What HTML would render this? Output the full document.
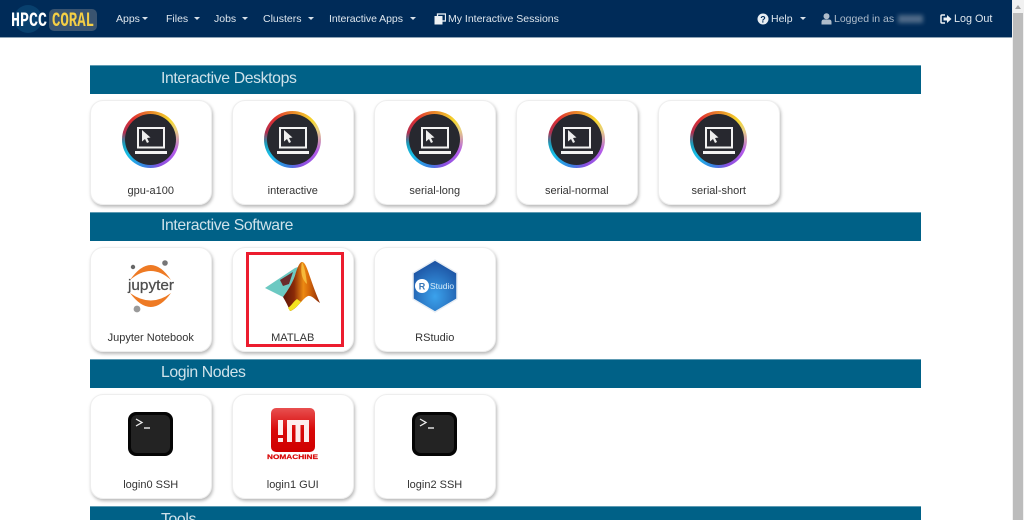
<!DOCTYPE html>
<html><head><meta charset="utf-8"><style>
html,body{margin:0;padding:0;background:#fff}
body{width:1024px;height:520px;overflow:hidden;position:relative;font-family:"Liberation Sans",sans-serif}
.nav{position:absolute;left:0;top:0;width:1012px;height:37px;background:#002b58;border-bottom:1px solid #8ea3b5}
.n{position:absolute;top:13px;font-size:10.5px;line-height:12px;color:#dfe7ee;white-space:nowrap}
.c{display:inline-block;width:0;height:0;border:3px solid transparent;border-top-color:#d9e2ea;border-bottom:0;vertical-align:2px;margin-left:4px}
.bar{position:absolute;left:90px;width:831px;height:29px;background:#006187;border-top:1px solid #5e9bb3;box-sizing:border-box;color:#cfe2ea;font-size:15.8px;line-height:25px;padding-left:71px;letter-spacing:-.38px;overflow:hidden}
.card{position:absolute;width:121.5px;height:105px;background:#fff;border-radius:13px;border:1px solid #eee;box-sizing:border-box;box-shadow:1px 2px 3px rgba(0,0,0,.28)}
.card span{position:absolute;left:0;right:0;top:84px;text-align:center;font-size:11px;line-height:12px;color:#333}
.card svg{position:absolute;left:0;top:0}
.ring{position:absolute;left:31px;top:10px;width:57px;height:57px;border-radius:50%;background:conic-gradient(from 0deg,#e8872a 0deg,#f5d52c 45deg,#e8d080 70deg,#b45ce8 115deg,#8a4fe0 160deg,#3a7fe0 190deg,#18c0e8 235deg,#1d9ab8 262deg,#b03050 285deg,#e03030 320deg,#e8872a 360deg)}
.ring i{position:absolute;left:3px;top:3px;width:51px;height:51px;border-radius:50%;background:#27282f}
.ring svg{left:0;top:0}
.sb{position:absolute;left:1012px;top:0;width:12px;height:520px;background:#f1f1f1}
.sb b{position:absolute;left:1px;top:13px;width:10px;height:507px;background:#bcbcbc}
.sb u{position:absolute;left:3px;top:5px;border:3px solid transparent;border-bottom:4px solid #a3a3a3;border-top:0}
</style></head><body>
<div class="nav">
<svg width="100" height="37" style="position:absolute;left:0;top:0"><circle cx="28" cy="19" r="14" fill="#0b4a78" opacity=".7"/><rect x="49" y="9" width="48" height="22" rx="5" fill="#3a5470"/><text x="11" y="26" font-family="Liberation Mono" font-weight="700" font-size="20" fill="#fff" textLength="36" lengthAdjust="spacingAndGlyphs">HPCC</text><text x="52" y="26" font-family="Liberation Mono" font-weight="700" font-size="20" fill="#f5cf45" textLength="42" lengthAdjust="spacingAndGlyphs">CORAL</text></svg>
<div class="n" style="left:116px">Apps<i class="c" style="margin-left:2px"></i></div>
<div class="n" style="left:166px">Files<i class="c" style="margin-left:6px"></i></div>
<div class="n" style="left:214px">Jobs<i class="c" style="margin-left:6px"></i></div>
<div class="n" style="left:263px">Clusters<i class="c" style="margin-left:6px"></i></div>
<div class="n" style="left:329px;letter-spacing:-.05px">Interactive Apps<i class="c" style="margin-left:7px"></i></div>
<svg width="12" height="12" style="position:absolute;left:434px;top:13px"><rect x="3.5" y="1" width="8" height="7" fill="none" stroke="#e8eef3" stroke-width="1.3"/><rect x="0.5" y="3" width="8" height="8.5" fill="#eef2f5"/></svg>
<div class="n" style="left:448px">My Interactive Sessions</div>
<svg width="12" height="12" style="position:absolute;left:757px;top:13px"><circle cx="6" cy="6" r="5.5" fill="#e8eef3"/><text x="6" y="9.5" text-anchor="middle" font-size="9" font-weight="700" fill="#002b58" font-family="Liberation Sans">?</text></svg>
<div class="n" style="left:771px">Help<i class="c" style="margin-left:7px"></i></div>
<svg width="11" height="12" style="position:absolute;left:821px;top:13px"><circle cx="5.5" cy="3.3" r="3" fill="#aebccb"/><path d="M.5 11.500V9Q.5 6.500 3 6.500H8Q10.500 6.500 10.500 9V11.500Z" fill="#aebccb"/></svg>
<div class="n" style="left:834px;color:#aebccb">Logged in as</div>
<div style="position:absolute;left:898px;top:15px;width:25px;height:8px;background:#6a8199;filter:blur(2px);opacity:.75"></div>
<svg width="12" height="12" style="position:absolute;left:940px;top:13px"><path d="M5 2H2Q1 2 1 3V9Q1 10 2 10H5" fill="none" stroke="#eef2f5" stroke-width="1.500"/><path d="M3.500 4.500H7V2L11.500 6 7 10V7.500H3.500Z" fill="#eef2f5"/></svg>
<div class="n" style="left:954px;font-size:10.8px">Log Out</div>
</div>
<div class="sb"><u></u><b></b></div>

<svg width="0" height="0" style="position:absolute"><defs>
<g id="d"><path d="M16 17H42V36.500H16Z" fill="none" stroke="#f2f2f2" stroke-width="2"/><path d="M13 40H45V43H13Z" fill="#f2f2f2"/><path d="M20 19V30.500L23 28 25 32 27 31 25 27 28.500 26.500Z" fill="#eee"/></g>
<g id="t"><rect x="37" y="17" width="45" height="44" rx="8" fill="#050505"/><rect x="40" y="20" width="39" height="38" rx="6" fill="#232323"/><path d="M45 24L51 27.500 45 31" fill="none" stroke="#eee" stroke-width="1.300"/><path d="M53 33H59" stroke="#ddd" stroke-width="1.500"/></g>
</defs></svg>

<div class="bar" style="top:65px">Interactive Desktops</div>
<div class="bar" style="top:212px">Interactive Software</div>
<div class="bar" style="top:359px">Login Nodes</div>
<div class="bar" style="top:506px;height:14px">Tools</div>

<div class="card" style="left:90px;top:100px"><div class="ring"><i></i><svg width="57" height="57"><use href="#d"/></svg></div><span>gpu-a100</span></div>
<div class="card" style="left:232px;top:100px"><div class="ring"><i></i><svg width="57" height="57"><use href="#d"/></svg></div><span>interactive</span></div>
<div class="card" style="left:374px;top:100px"><div class="ring"><i></i><svg width="57" height="57"><use href="#d"/></svg></div><span>serial-long</span></div>
<div class="card" style="left:516px;top:100px"><div class="ring"><i></i><svg width="57" height="57"><use href="#d"/></svg></div><span>serial-normal</span></div>
<div class="card" style="left:658px;top:100px"><div class="ring"><i></i><svg width="57" height="57"><use href="#d"/></svg></div><span>serial-short</span></div>

<div class="card" style="left:90px;top:247px">
<svg width="119" height="80"><path d="M39 32Q60 2 80 32Q60 14 39 32Z" fill="#ee7a24"/><path d="M39 45Q60 73 80 45Q60 60 39 45Z" fill="#ee7a24"/><circle cx="42" cy="19" r="2.200" fill="#666"/><circle cx="74" cy="15" r="2.800" fill="#767677"/><circle cx="46" cy="61" r="3.400" fill="#9a9a9a"/><text x="37" y="42" font-family="Liberation Sans" font-size="15" fill="#4e4e4e" stroke="#4e4e4e" stroke-width=".25" textLength="46" lengthAdjust="spacingAndGlyphs">jupyter</text></svg>
<span>Jupyter Notebook</span></div>

<div class="card" style="left:232px;top:247px">
<svg width="119" height="80"><defs><linearGradient id="m" x1="0" y1="0" x2="1" y2="0"><stop offset="0" stop-color="#5c1408"/><stop offset=".3" stop-color="#8a2a08"/><stop offset=".55" stop-color="#ec8a12"/><stop offset=".7" stop-color="#d86a0a"/><stop offset="1" stop-color="#8a2a08"/></linearGradient></defs>
<path d="M32 40L47 30 62 20 65 19 58 38 50 49Z" fill="#6cc9c2"/><path d="M47 32L60 24 56 36 50 38Z" fill="#6b2c2c"/><path d="M50 49C55 42 60 35 63 24 65 18 67 14 69 14 74 14 76 30 87 55 82 52 79 47 75 48 70 50 63 62 57 63 55 58 53 54 50 49Z" fill="url(#m)"/><path d="M55 60C59 57 60 54 64 51L68 54C64 58 61 62 57 63Z" fill="#f4e31f"/><path d="M69 14C72 20 73 28 74 36 69 32 67 24 69 14Z" fill="#f6b93a"/></svg>
<span>MATLAB</span></div>
<div style="position:absolute;left:246px;top:252px;width:98px;height:95px;border:3px solid #ec1c2e;box-sizing:border-box"></div>

<div class="card" style="left:374px;top:247px">
<svg width="119" height="80"><defs><radialGradient id="r" cx=".5" cy=".7" r=".7"><stop offset="0" stop-color="#3ba2ec"/><stop offset="1" stop-color="#1b4f9f"/></radialGradient></defs><path d="M60 12L82 25V51L60 64 38 51V25Z" fill="url(#r)" stroke="#e8eef4" stroke-width="1.500"/><circle cx="47" cy="38" r="7" fill="#fff"/><text x="47" y="41.500" text-anchor="middle" font-family="Liberation Sans" font-weight="700" font-size="9" fill="#3a78b8">R</text><text x="55" y="41" font-family="Liberation Sans" font-size="8.500" fill="#d8ebf8">Studio</text></svg>
<span>RStudio</span></div>

<div class="card" style="left:90px;top:394px"><svg width="119" height="80"><use href="#t"/></svg><span>login0 SSH</span></div>
<div class="card" style="left:232px;top:394px">
<svg width="119" height="80"><defs><linearGradient id="nm" x1="0" y1="0" x2="0" y2="1"><stop offset="0" stop-color="#e85050"/><stop offset=".5" stop-color="#d80808"/><stop offset="1" stop-color="#d00000"/></linearGradient></defs><rect x="38" y="13" width="44" height="44" rx="5" fill="url(#nm)"/><path d="M45 25H50V40H45ZM45 43H50V47H45ZM54 25H76V47H71V30H67.500V47H62.500V30H59V47H54Z" fill="#fff" opacity=".93"/><text x="34" y="64" font-family="Liberation Sans" font-weight="700" font-size="6.500" fill="#d80808" stroke="#d80808" stroke-width=".2" textLength="51" lengthAdjust="spacingAndGlyphs">NOMACHINE</text></svg>
<span>login1 GUI</span></div>
<div class="card" style="left:374px;top:394px"><svg width="119" height="80"><use href="#t"/></svg><span>login2 SSH</span></div>
</body></html>
